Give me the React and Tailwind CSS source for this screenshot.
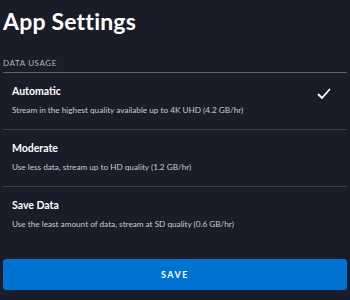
import React from "react";

const options = [
  { id: "auto", title: "Automatic", desc: "Stream in the highest quality available up to 4K UHD (4.2 GB/hr)", checked: true },
  { id: "moderate", title: "Moderate", desc: "Use less data, stream up to HD quality (1.2 GB/hr)" },
  { id: "save", title: "Save Data", desc: "Use the least amount of data, stream at SD quality (0.6 GB/hr)" },
];

const Check = () => (
  <svg width="14" height="12" viewBox="0 0 14 12" fill="none" className="text-white">
    <path d="M1.5 6.5 L5 10 L12.5 1.5" stroke="currentColor" strokeWidth="1.8" strokeLinecap="round" strokeLinejoin="round" />
  </svg>
);

export default function App() {
  return (
    <div
      className="w-[350px] h-[300px] bg-[#1a1d29] text-white px-[3px] overflow-hidden"
      style={{ fontFamily: "Lato, 'Noto Sans', sans-serif" }}
    >
      <h1 className="text-[23px] font-bold leading-none pt-[10px] tracking-[0.2px]">App Settings</h1>
      <p className="mt-[26px] text-[8px] leading-none tracking-[0.6px] text-[#b4b6bd]">DATA USAGE</p>
      <div className="mt-[5px] border-t border-[#5b5f6b]" />
      {options.map((o, i) => (
        <div
          key={o.id}
          className={`flex items-start justify-between pl-[9px] pr-[16px] h-[57px] ${i < options.length - 1 ? "border-b border-[#3a3e4a]" : ""}`}
        >
          <div className="pt-[13px]">
            <p className="text-[10.5px] font-bold leading-none">{o.title}</p>
            <p className="mt-[9px] text-[8.2px] leading-none text-[#c9cacf]">{o.desc}</p>
          </div>
          {o.checked && (
            <div className="pt-[15px]">
              <Check />
            </div>
          )}
        </div>
      ))}
      <button className="mt-[15px] w-full h-[31px] rounded-[3px] bg-[#0072d2] text-[9px] font-bold tracking-[1.5px] text-white">
        SAVE
      </button>
    </div>
  );
}
